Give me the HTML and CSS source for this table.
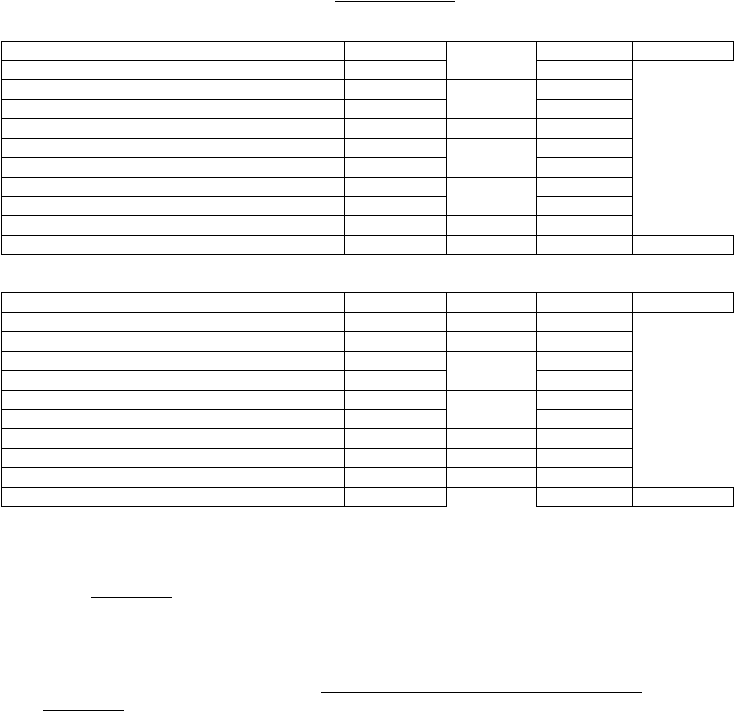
FILE: index.html
```html
<!DOCTYPE html>
<html lang="en">
<head>
<meta charset="utf-8">
<title>Form</title>
<link rel="stylesheet" href="styles.css">
</head>
<body>
<div class="page">
  <div class="rule title-rule"></div>

  <div class="grid t1">
    <div class="c"></div><div class="c"></div><div class="c span2"></div><div class="c"></div><div class="c r"></div>
    <div class="c"></div><div class="c"></div><div class="c"></div><div class="c void"></div>
    <div class="c"></div><div class="c"></div><div class="c span2"></div><div class="c"></div>
    <div class="c"></div><div class="c"></div><div class="c"></div>
    <div class="c"></div><div class="c"></div><div class="c"></div><div class="c"></div>
    <div class="c"></div><div class="c"></div><div class="c span2"></div><div class="c"></div>
    <div class="c"></div><div class="c"></div><div class="c"></div>
    <div class="c"></div><div class="c"></div><div class="c span2"></div><div class="c"></div>
    <div class="c"></div><div class="c"></div><div class="c"></div>
    <div class="c"></div><div class="c"></div><div class="c"></div><div class="c"></div>
    <div class="c b"></div><div class="c b"></div><div class="c b"></div><div class="c b"></div><div class="c r b"></div>
  </div>

  <div class="grid t2">
    <div class="c"></div><div class="c"></div><div class="c"></div><div class="c"></div><div class="c r"></div>
    <div class="c"></div><div class="c"></div><div class="c"></div><div class="c"></div><div class="c void"></div>
    <div class="c"></div><div class="c"></div><div class="c"></div><div class="c"></div>
    <div class="c"></div><div class="c"></div><div class="c span2"></div><div class="c"></div>
    <div class="c"></div><div class="c"></div><div class="c"></div>
    <div class="c"></div><div class="c"></div><div class="c span2"></div><div class="c"></div>
    <div class="c"></div><div class="c"></div><div class="c"></div>
    <div class="c"></div><div class="c"></div><div class="c"></div><div class="c"></div>
    <div class="c"></div><div class="c"></div><div class="c"></div><div class="c"></div>
    <div class="c"></div><div class="c"></div><div class="c"></div><div class="c"></div>
    <div class="c b"></div><div class="c b"></div><div class="c"></div><div class="c b"></div><div class="c r b"></div>
  </div>

  <div class="rule sig-a"></div>
  <div class="rule sig-b"></div>
  <div class="rule sig-c"></div>
</div>
</body>
</html>
```
FILE: styles.css
```css
html, body {
  margin: 0;
  padding: 0;
  background: #ffffff;
  font-family: "Liberation Serif", serif;
}

.page {
  width: 735px;
  height: 711px;
  overflow: hidden;
  padding-top: 1px;
  box-sizing: border-box;
}

.rule {
  height: 1px;
  background: #000000;
}

.title-rule {
  width: 120px;
  margin-left: 335px;
}

.grid {
  display: grid;
  grid-template-columns: 343px 102px 90px 96px 102px;
  margin-left: 1px;
  width: 733px;
}

.t1 {
  margin-top: 39px;
  grid-template-rows: 19px 19px 20px 19px 20px 19px 20px 19px 19px 20px 20px;
}

.t2 {
  margin-top: 37px;
  grid-template-rows: 20px 19px 20px 19px 20px 19px 19px 20px 19px 20px 20px;
}

.c {
  box-sizing: border-box;
  border-top: 1px solid #000000;
  border-left: 1px solid #000000;
}

.c.r {
  border-right: 1px solid #000000;
}

.c.b {
  border-bottom: 1px solid #000000;
}

.span2 {
  grid-row: span 2;
}

.void {
  grid-row: span 9;
}

.sig-a {
  width: 81px;
  margin-left: 91px;
  margin-top: 90px;
}

.sig-b {
  width: 321px;
  margin-left: 321px;
  margin-top: 94px;
}

.sig-c {
  width: 81px;
  margin-left: 43px;
  margin-top: 17px;
}
```
